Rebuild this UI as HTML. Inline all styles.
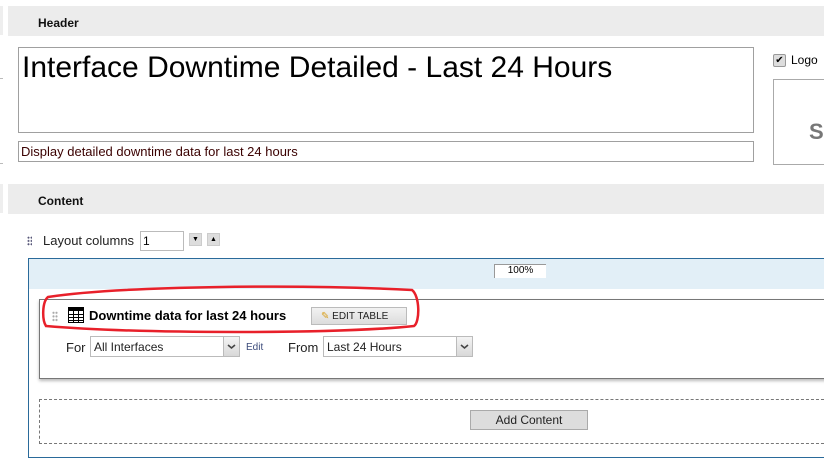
<!DOCTYPE html>
<html><head><style>
*{margin:0;padding:0;box-sizing:border-box}
body{width:824px;height:450px;overflow:hidden;background:#fff;font-family:"Liberation Sans",Arial,sans-serif;position:relative;color:#000}
.a{position:absolute}
.bar{background:#ececec;left:8px;width:816px;height:30px;font-weight:bold;font-size:12px;padding-left:30px;line-height:34px;color:#111}
.sel{border:1px solid #bbb;height:21px;font-size:12px;line-height:20px;padding-left:3px;color:#222;background:#fff}
.sel .arr{position:absolute;right:0;top:0;width:16px;height:19px;background:linear-gradient(#f4f4f4,#d8d8d8);border-left:1px solid #bbb}
</style></head><body>
<div class="a" style="left:0;top:6px;width:3px;height:29px;background:#eee"></div>
<div class="a" style="left:0;top:78px;width:3px;height:1px;background:#bbb"></div>
<div class="a" style="left:0;top:163px;width:3px;height:1px;background:#bbb"></div>
<div class="a" style="left:0;top:184px;width:3px;height:29px;background:#eee"></div>
<div class="a bar" style="top:6px">Header</div>
<div class="a" style="left:18px;top:47px;width:736px;height:86px;border:1px solid #a0a0a0;font-size:30px;padding:3px 0 0 3px;line-height:34px">Interface Downtime Detailed - Last 24 Hours</div>
<div class="a" style="left:18px;top:141px;width:736px;height:21px;border:1px solid #a0a0a0;font-size:13px;padding-left:2px;line-height:20px;color:#3a0000">Display detailed downtime data for last 24 hours</div>
<div class="a" style="left:773px;top:54px;width:13px;height:13px;border:1px solid #999;background:#ddd;border-radius:2px;font-size:10px;line-height:11px;text-align:center">✔</div>
<div class="a" style="left:791px;top:53px;font-size:12px">Logo</div>
<div class="a" style="left:773px;top:79px;width:60px;height:86px;border:1px solid #aaa;font-size:22px;font-weight:bold;color:#777;padding:39px 0 0 35px">S</div>
<div class="a bar" style="top:184px">Content</div>
<div class="a" style="left:27px;top:236px;width:5px;height:10px;background:radial-gradient(circle,#557 0.8px,transparent 1.2px) 0 0/3px 3.3px"></div>
<div class="a" style="left:43px;top:233px;font-size:13px;color:#222">Layout columns</div>
<div class="a" style="left:140px;top:231px;width:44px;height:20px;border:1px solid #bbb;font-size:12px;padding-left:2px;line-height:18px">1</div>
<div class="a" style="left:189px;top:233px;width:13px;height:13px;background:#ddd;border:1px solid #ccc;font-size:7px;text-align:center;line-height:12px">▼</div>
<div class="a" style="left:207px;top:233px;width:13px;height:13px;background:#ddd;border:1px solid #ccc;font-size:7px;text-align:center;line-height:12px">▲</div>
<div class="a" style="left:28px;top:258px;width:800px;height:200px;border:1px solid #2a6a9a"></div>
<div class="a" style="left:29px;top:259px;width:795px;height:30px;background:#e2eff7"></div>
<div class="a" style="left:494px;top:264px;width:52px;height:14px;background:#fff;border-top:1px solid #999;border-left:1px solid #999;font-size:10px;text-align:center;line-height:12px">100%</div>
<div class="a" style="left:39px;top:299px;width:790px;height:80px;border:1px solid #777;box-shadow:0 2px 3px #bbb"></div>
<div class="a" style="left:52px;top:311px;width:6px;height:11px;background:radial-gradient(circle,#aaa 0.9px,transparent 1.3px) 0 0/3px 3.6px"></div>
<svg class="a" style="left:68px;top:307px" width="16" height="16"><rect x="0.5" y="0.5" width="15" height="15" fill="#fff" stroke="#000"/><rect x="0" y="0" width="16" height="4" fill="#000"/><path d="M0 7.5H16M0 10.5H16M0 13.5H16M5.5 4V16M10.5 4V16" stroke="#000"/></svg>
<div class="a" style="left:89px;top:308px;font-size:13px;font-weight:bold">Downtime data for last 24 hours</div>
<div class="a" style="left:311px;top:307px;width:96px;height:18px;border:1px solid #bbb;background:linear-gradient(#f2f2f2,#dcdcdc);font-size:10px;line-height:18px;padding-left:9px;color:#222"><span style="color:#d9a020">✎</span> EDIT TABLE</div>
<div class="a" style="left:66px;top:340px;font-size:13px;color:#222">For</div>
<div class="a sel" style="left:90px;top:336px;width:150px">All Interfaces<div class="arr"><svg width="15" height="19"><path d="M4 8l3.5 3 3.5-3" fill="none" stroke="#444" stroke-width="1.6"/></svg></div></div>
<div class="a" style="left:246px;top:342px;font-size:10px;color:#3a4a7a">Edit</div>
<div class="a" style="left:288px;top:340px;font-size:13px;color:#222">From</div>
<div class="a sel" style="left:323px;top:336px;width:150px">Last 24 Hours<div class="arr"><svg width="15" height="19"><path d="M4 8l3.5 3 3.5-3" fill="none" stroke="#444" stroke-width="1.6"/></svg></div></div>
<div class="a" style="left:39px;top:399px;width:790px;height:45px;border:1px dashed #777"></div>
<div class="a" style="left:470px;top:410px;width:118px;height:20px;background:#ddd;border:1px solid #aaa;font-size:12px;text-align:center;line-height:18px;color:#222">Add Content</div>
<svg class="a" style="left:0;top:0" width="824" height="450"><path d="M48 297 C120 286,300 284,412 290 C420 296,420 322,414 326 C340 334,140 334,46 326 C42 320,42 302,48 297Z" fill="none" stroke="#e8202a" stroke-width="2.5"/></svg>
</body></html>
